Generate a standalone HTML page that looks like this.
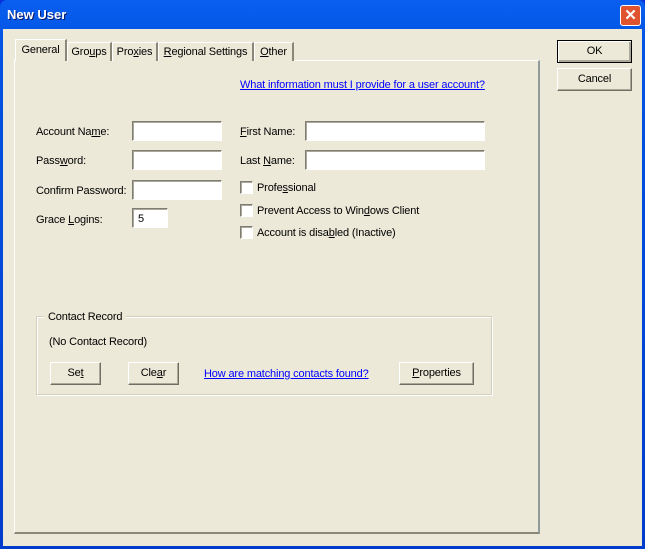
<!DOCTYPE html><html><head><style>
*{margin:0;padding:0;box-sizing:border-box}
body{width:645px;height:549px;overflow:hidden;font-family:"Liberation Sans",sans-serif;font-size:11px;letter-spacing:-0.15px;color:#000;background:#0831d9}
.a{position:absolute}
#win{position:absolute;left:0;top:0;width:645px;height:549px;background:linear-gradient(#0a5ff0,#0054e3 8%,#0046d8 60%,#003ccc);border-radius:7px 7px 0 0}
#client{position:absolute;left:3px;top:29px;width:639px;height:517px;background:#ece9d8}
#title{left:7px;top:7px;color:#fff;font-weight:bold;font-size:13px;letter-spacing:0;text-shadow:1px 1px #0a1a6a}
#close{left:620px;top:5px;width:21px;height:21px;background:#e0532f;border:1px solid #fff;border-radius:3px;color:#fff;font-weight:bold;font-size:15px;text-align:center;line-height:19px}
.panel{left:14px;top:60px;width:526px;height:474px;border-left:1px solid #fff;border-top:1px solid #fff;border-right:2px solid #8a8778;border-bottom:2px solid #8a8778;border-right-color:#919b9c}
.tab{top:42px;height:19px;background:#ece9d8;border:1px solid #fff;border-right:2px solid #8a8778;border-bottom:none;text-align:center;line-height:19px}
.tab.sel{top:39px;height:22px;z-index:2;border-bottom:none;line-height:21px}
.in{background:#fff;border:1px solid;border-color:#7f7d73 #fff #fff #7f7d73;box-shadow:inset 1px 1px #aca899;height:20px}
.btn{background:#ece9d8;border:1px solid;border-color:#fff #716f64 #716f64 #fff;box-shadow:inset -1px -1px #aca899;text-align:center;line-height:21px;height:23px}
.cb{width:13px;height:13px;background:#fff;border:1px solid;border-color:#7f7d73 #fff #fff #7f7d73;box-shadow:inset 1px 1px #aca899}
a{color:#0000ff;text-decoration:underline}
u{text-decoration:underline}
</style></head><body>
<div id="win"></div>
<div class="a" id="title">New User</div>
<div class="a" id="close">✕</div>
<div id="client"></div>
<div class="a panel"></div>
<div class="a tab sel" style="left:15px;width:52px">General</div>
<div class="a tab" style="left:67px;width:45px">Gro<u>u</u>ps</div>
<div class="a tab" style="left:112px;width:46px">Pro<u>x</u>ies</div>
<div class="a tab" style="left:158px;width:96px"><u>R</u>egional Settings</div>
<div class="a tab" style="left:254px;width:40px"><u>O</u>ther</div>
<div class="a btn" style="left:557px;top:40px;width:75px;border:1px solid #000;box-shadow:inset 1px 1px #fff,inset -2px -2px #aca899">OK</div>
<div class="a btn" style="left:557px;top:68px;width:75px">Cancel</div>
<a class="a" style="left:240px;top:79px">What information must I provide for a user account?</a>
<div class="a" style="left:36px;top:126px">Account Na<u>m</u>e:</div>
<div class="a" style="left:36px;top:155px">Pass<u>w</u>ord:</div>
<div class="a" style="left:36px;top:185px">Confirm Password:</div>
<div class="a" style="left:36px;top:214px">Grace <u>L</u>ogins:</div>
<div class="a in" style="left:132px;top:121px;width:90px"></div>
<div class="a in" style="left:132px;top:150px;width:90px"></div>
<div class="a in" style="left:132px;top:180px;width:90px"></div>
<div class="a in" style="left:132px;top:208px;width:36px;padding:4px 0 0 5px">5</div>
<div class="a" style="left:240px;top:126px"><u>F</u>irst Name:</div>
<div class="a" style="left:240px;top:155px">Last <u>N</u>ame:</div>
<div class="a in" style="left:305px;top:121px;width:180px"></div>
<div class="a in" style="left:305px;top:150px;width:180px"></div>
<div class="a cb" style="left:240px;top:181px"></div><div class="a" style="left:257px;top:182px">Profe<u>s</u>sional</div>
<div class="a cb" style="left:240px;top:204px"></div><div class="a" style="left:257px;top:205px">Prevent Access to Win<u>d</u>ows Client</div>
<div class="a cb" style="left:240px;top:226px"></div><div class="a" style="left:257px;top:227px">Account is disa<u>b</u>led (Inactive)</div>
<div class="a" style="left:36px;top:316px;width:456px;height:79px;border:1px solid #d0d0bf;box-shadow:inset 1px 1px #fff,1px 1px #fff"></div>
<div class="a" style="left:44px;top:311px;background:#ece9d8;padding:0 4px">Contact Record</div>
<div class="a" style="left:49px;top:336px">(No Contact Record)</div>
<div class="a btn" style="left:50px;top:362px;width:51px">Se<u>t</u></div>
<div class="a btn" style="left:128px;top:362px;width:51px">Cle<u>a</u>r</div>
<a class="a" style="left:204px;top:368px">How are matching contacts found?</a>
<div class="a btn" style="left:399px;top:362px;width:75px"><u>P</u>roperties</div>
</body></html>
